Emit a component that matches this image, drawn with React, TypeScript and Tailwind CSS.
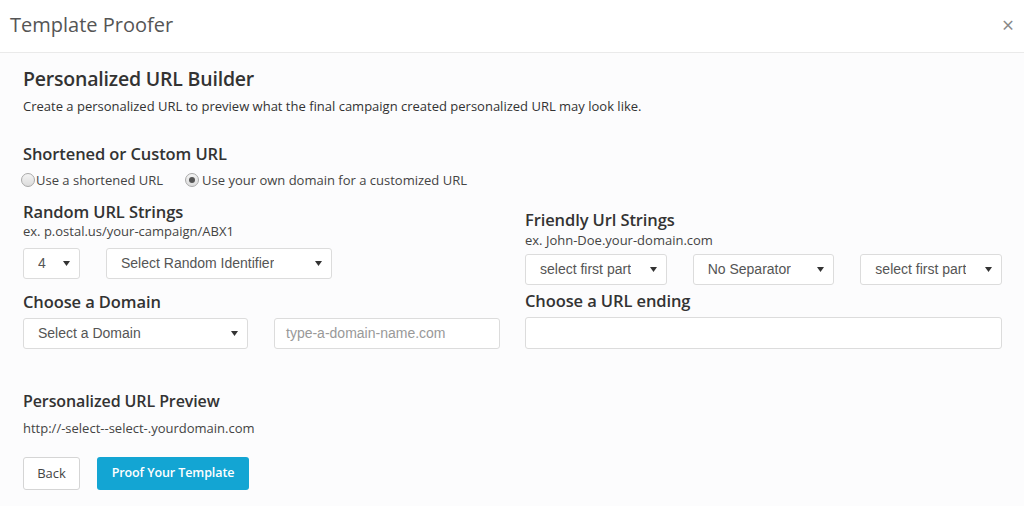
import React from "react";

const body = { fontFamily: '"Open Sans", "Noto Sans", sans-serif' };
const arial = { fontFamily: '"Liberation Sans", Arial, sans-serif' };

function Caret() {
  return (
    <svg width="7" height="5" viewBox="0 0 7 5" className="shrink-0">
      <path d="M0 0 H7 L3.5 5 Z" fill="#333" />
    </svg>
  );
}

function Select({ label, w }: { label: string; w: string }) {
  return (
    <div
      className={`${w} h-[31px] flex items-center justify-between pl-[14px] pr-[9px] bg-white border border-[#dcdcdc] rounded-[3px] text-[14px] text-[#555]`}
      style={arial}
    >
      <span className="truncate">{label}</span>
      <Caret />
    </div>
  );
}

function Radio({ checked }: { checked?: boolean }) {
  return (
    <span className="w-[14px] h-[14px] rounded-full border border-[#a9a9a9] bg-gradient-to-b from-[#f4f4f4] to-[#dcdcdc] flex items-center justify-center shrink-0">
      {checked && <span className="w-[6px] h-[6px] rounded-full bg-[#555]" />}
    </span>
  );
}

export default function App() {
  return (
    <div className="w-[1024px] h-[506px] bg-[#fcfcfd] text-[#333] overflow-hidden" style={body}>
      <div className="h-[53px] bg-white border-b border-[#eaeaea] flex items-center justify-between pl-[10px] pr-[10px]">
        <div className="text-[20px] text-[#555] leading-[24px] -mt-[2px]">Template Proofer</div>
        <div className="text-[21px] text-[#888] leading-none -mt-[1px]">×</div>
      </div>
      <div className="px-[23px] pt-[14px]">
        <h1 className="text-[19.5px] font-semibold leading-[24px] text-[#333] tracking-[-0.2px]">Personalized URL Builder</h1>
        <p className="mt-[6px] text-[13px] leading-[18px]">
          Create a personalized URL to preview what the final campaign created personalized URL may look like.
        </p>
        <h2 className="mt-[28px] text-[16.5px] font-semibold leading-[22px] tracking-[-0.1px]">Shortened or Custom URL</h2>
        <div className="mt-[6px] flex items-center text-[13px] leading-[18px] -ml-[2px]">
          <Radio />
          <span className="ml-[1px] text-[#444]">Use a shortened URL</span>
          <span className="ml-[22px]"><Radio checked /></span>
          <span className="ml-[3px] text-[#444]">Use your own domain for a customized URL</span>
        </div>
        <div className="flex gap-[25px]">
          <div className="w-[477px] mt-[12px]">
            <h2 className="text-[16.5px] font-semibold leading-[22px] tracking-[-0.1px]">Random URL Strings</h2>
            <div className="text-[13px] leading-[16px] text-[#444]">ex. p.ostal.us/your-campaign/ABX1</div>
            <div className="mt-[9px] flex gap-[26px]">
              <Select label="4" w="w-[57px]" />
              <Select label="Select Random Identifier" w="w-[226px]" />
            </div>
            <h2 className="mt-[12px] text-[16.5px] font-semibold leading-[22px] tracking-[-0.1px]">Choose a Domain</h2>
            <div className="mt-[5px] flex gap-[26px]">
              <Select label="Select a Domain" w="w-[225px]" />
              <div
                className="w-[226px] h-[31px] flex items-center pl-[11px] bg-white border border-[#dcdcdc] rounded-[3px] text-[14px] text-[#999]"
                style={arial}
              >
                type-a-domain-name.com
              </div>
            </div>
          </div>
          <div className="w-[477px] mt-[20px]">
            <h2 className="text-[16.5px] font-semibold leading-[22px] tracking-[-0.1px]">Friendly Url Strings</h2>
            <div className="mt-[1px] text-[13px] leading-[16px] text-[#444]">ex. John-Doe.your-domain.com</div>
            <div className="mt-[6px] flex gap-[26px]">
              <Select label="select first part" w="w-[142px]" />
              <Select label="No Separator" w="w-[142px]" />
              <Select label="select first part" w="w-[142px]" />
            </div>
            <h2 className="mt-[5px] text-[16.5px] font-semibold leading-[22px] tracking-[-0.1px]">Choose a URL ending</h2>
            <div className="mt-[5px] h-[32px] bg-white border border-[#dcdcdc] rounded-[3px]" />
          </div>
        </div>
        <h2 className="mt-[41px] text-[16px] font-semibold leading-[22px] tracking-[-0.1px]">Personalized URL Preview</h2>
        <div className="mt-[7px] text-[13px] leading-[18px] text-[#444]">http://-select--select-.yourdomain.com</div>
        <div className="mt-[20px] flex gap-[17px]">
          <button className="w-[57px] h-[33px] bg-white border border-[#d5d5d5] rounded-[3px] text-[13px] text-[#444]">
            Back
          </button>
          <button className="w-[152px] h-[33px] bg-[#13a5d3] rounded-[3px] text-[12.5px] font-semibold text-white tracking-[-0.1px]">
            Proof Your Template
          </button>
        </div>
      </div>
    </div>
  );
}
